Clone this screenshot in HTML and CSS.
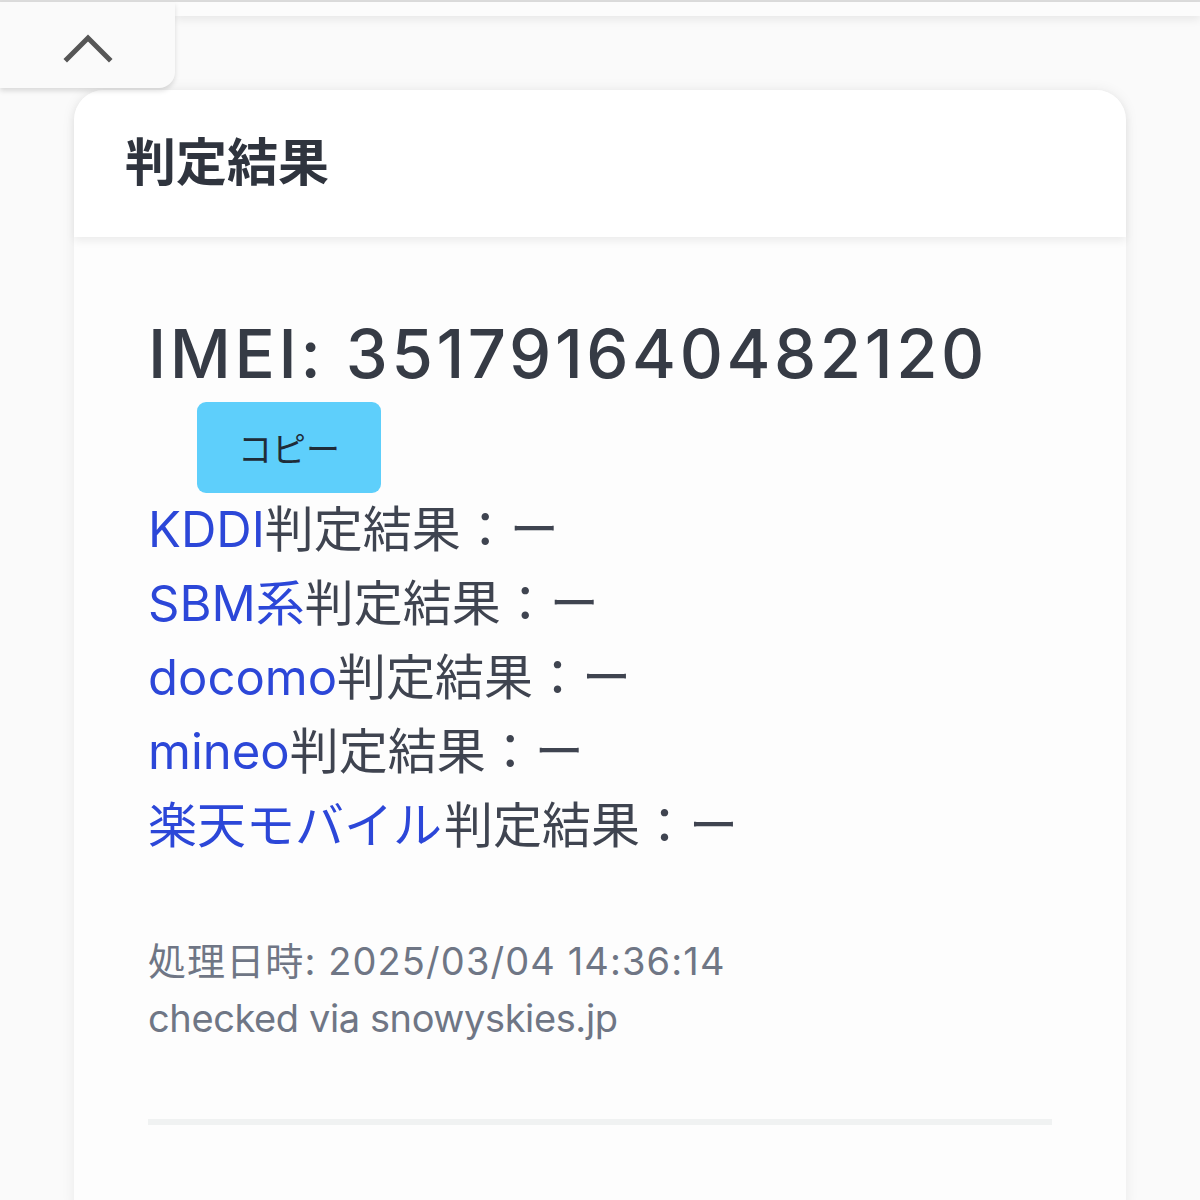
FILE: index.html
```html
<!DOCTYPE html>
<html lang="ja">
<head>
<meta charset="utf-8">
<title>判定結果</title>
<link rel="stylesheet" href="styles.css">
</head>
<body>
<div class="topline"></div>
<div class="topbar">
  <div class="tab">
    <svg class="chev" width="50" height="30" viewBox="0 0 50 30"><path d="M4 25 L25 4 L46 25" fill="none" stroke="#565656" stroke-width="5" stroke-linecap="square"/></svg>
  </div>
  <div class="strip"></div>
</div>
<main class="card">
  <header class="card-head">
    <h1 class="title">判定結果</h1>
  </header>
  <section class="card-body">
    <div class="imei">IMEI: 351791640482120</div>
    <button class="copy">コピー</button>
    <ul class="results">
      <li><a class="carrier">KDDI</a>判定結果：ー</li>
      <li><a class="carrier">SBM系</a>判定結果：ー</li>
      <li><a class="carrier">docomo</a>判定結果：ー</li>
      <li><a class="carrier">mineo</a>判定結果：ー</li>
      <li><a class="carrier spaced">楽天モバイル</a>判定結果：ー</li>
    </ul>
    <div class="meta">
      <div class="date">処理日時: 2025/03/04 14:36:14</div>
      <div class="via">checked via snowyskies.jp</div>
    </div>
    <div class="divider"></div>
  </section>
</main>
</body>
</html>
```
FILE: styles.css
```css
html, body {
  margin: 0;
  padding: 0;
}
body {
  background: #fafafa;
  font-family: Inter, "Noto Sans CJK JP", sans-serif;
  height: 1200px;
  overflow: hidden;
}
.topline {
  height: 2px;
  background: #dcdcdc;
}
.topbar {
  display: flex;
  height: 86px;
  margin-bottom: 2px;
}
.tab {
  width: 175px;
  height: 86px;
  background: #fafafa;
  border-bottom-right-radius: 16px;
  box-shadow: 0 3px 5px rgba(0,0,0,0.13);
  display: flex;
  justify-content: center;
  align-items: flex-start;
  padding-top: 32px;
  box-sizing: border-box;
  position: relative;
  z-index: 2;
}
.chev {
  display: block;
}
.strip {
  flex: 1;
  height: 14px;
  background: #fcfcfc;
  box-shadow: 0 4px 8px rgba(0,0,0,0.07);
}
.card {
  margin: 0 74px;
  background: #fdfdfd;
  border-radius: 30px 30px 0 0;
  box-shadow: 0 0 14px rgba(0,0,0,0.07);
  height: 1120px;
}
.card-head {
  height: 147px;
  background: #ffffff;
  border-radius: 30px 30px 0 0;
  box-shadow: 0 4px 8px rgba(0,0,0,0.07);
  display: flex;
  align-items: center;
  padding-left: 51px;
  position: relative;
}
.title {
  margin: 0;
  font-family: "Noto Sans CJK JP", sans-serif;
  font-size: 51px;
  font-weight: 700;
  color: #2f343e;
  line-height: 1;
  margin-top: -8px;
}
.card-body {
  padding: 77px 74px 0;
}
.imei {
  font-size: 67px;
  line-height: 79px;
  color: #363b45;
  font-weight: 500;
  letter-spacing: 3.6px;
}
.copy {
  display: block;
  margin: 9px 0 0 49px;
  width: 184px;
  height: 91px;
  border: none;
  border-radius: 9px;
  background: #5ecffb;
  color: #1f2c38;
  font-family: "Noto Sans CJK JP", sans-serif;
  font-size: 34px;
  padding: 0;
}
.results {
  list-style: none;
  margin: 0;
  padding: 0;
  font-size: 49px;
  line-height: 74px;
  color: #3f4450;
}
.carrier {
  color: #2c47d8;
}
.spaced {
  margin-right: 2px;
}
.meta {
  margin-top: 70px;
  font-size: 38px;
  line-height: 57px;
  color: #6f7685;
}
.date {
  letter-spacing: 1.1px;
}
.via {
  letter-spacing: -0.4px;
}
.divider {
  margin-top: 72px;
  height: 6px;
  background: #f0f2f2;
}
```
